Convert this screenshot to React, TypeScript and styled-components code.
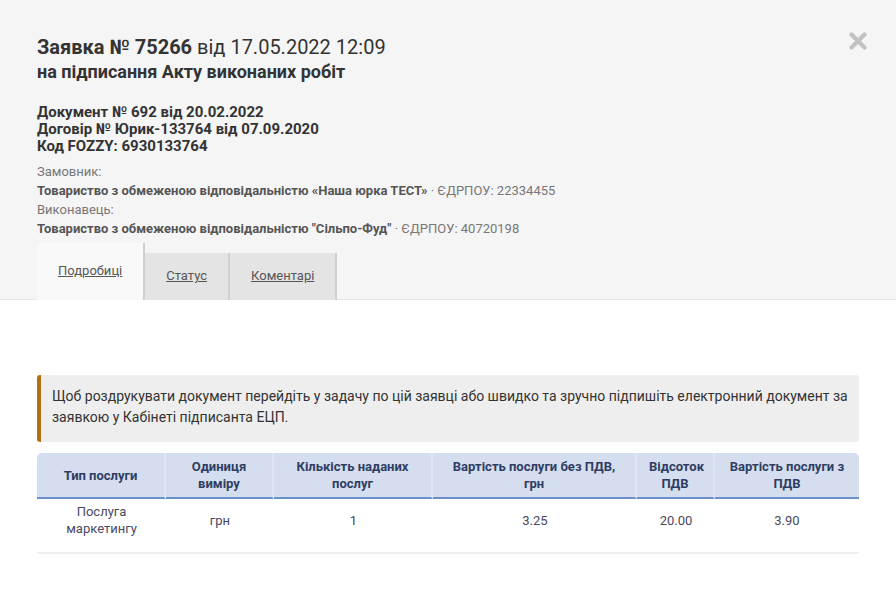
import React from "react"
import styled, { createGlobalStyle } from "styled-components"

const GlobalStyle = createGlobalStyle`
  body {
    margin: 0;
    background: #ffffff;
    font-family: Roboto, "Noto Sans", Arial, sans-serif;
    color: #333333;
  }
`

const Header = styled.div`
  position: relative;
  display: flex;
  flex-direction: column;
  box-sizing: border-box;
  background: #f5f5f5;
  border-bottom: 1px solid #e6e6e6;
  padding: 34px 37px 0;
  height: 300px;
`

const Close = styled.button`
  position: absolute;
  top: 32px;
  right: 29px;
  width: 18px;
  height: 18px;
  padding: 0;
  border: 0;
  background: none;
  cursor: pointer;
`

const Title = styled.h1`
  margin: 0;
  font-size: 20px;
  line-height: 26px;
  font-weight: 400;
  color: #333333;

  b {
    font-weight: 700;
  }
`

const Subtitle = styled.h2`
  margin: 0;
  font-size: 18px;
  line-height: 24px;
  font-weight: 700;
  color: #333333;
`

const DocInfo = styled.div`
  margin-top: 20px;
  font-size: 15px;
  line-height: 17px;
  font-weight: 700;
  color: #333333;
`

const Parties = styled.div`
  margin-top: 7px;
  font-size: 13px;
  line-height: 19px;
  color: #777777;
`

const PartyName = styled.div`
  b {
    font-weight: 700;
    color: #555555;
  }
`

const Tabs = styled.div`
  display: flex;
  align-items: flex-end;
  margin-top: auto;
  height: 56px;
`

const Tab = styled.a<{ $active?: boolean }>`
  display: flex;
  justify-content: center;
  box-sizing: border-box;
  height: ${(p) => (p.$active ? "57px" : "47px")};
  padding: ${(p) => (p.$active ? "20px 21px 0" : "15px 21px 0")};
  background: ${(p) => (p.$active ? "#f9f9f9" : "#e4e4e4")};
  border-right: 2px solid #cfcfcf;
  font-size: 13px;
  line-height: 16px;
  color: #555555;
  text-decoration: underline;
  cursor: pointer;
  margin-bottom: -1px;
`

const Content = styled.div`
  padding: 75px 37px 0;
`

const Notice = styled.div`
  background: #eeeeee;
  border-left: 4px solid #b5700f;
  border-radius: 3px;
  padding: 11px 8px 14px 11px;
  font-size: 14px;
  line-height: 21px;
  color: #333333;
`

const Table = styled.table`
  width: 100%;
  margin-top: 11px;
  border-collapse: separate;
  border-spacing: 0;
  table-layout: fixed;
`

const Th = styled.th`
  background: #d5deee;
  border-bottom: 2px solid #6b8fc8;
  border-right: 2px solid #dfe6f2;
  height: 44px;
  padding: 0 12px;
  font-size: 13px;
  line-height: 17px;
  font-weight: 700;
  color: #2f3d63;
  text-align: center;

  &:first-child {
    border-top-left-radius: 5px;
  }
  &:last-child {
    border-top-right-radius: 5px;
    border-right: 0;
  }
`

const Td = styled.td`
  padding: 4px 12px 15px;
  border-bottom: 2px solid #efefef;
  font-size: 13px;
  line-height: 17px;
  color: #4a4860;
  text-align: center;
  vertical-align: middle;
`

const columns = [
  { title: "Тип послуги", width: 129 },
  { title: "Одиниця виміру", width: 108 },
  { title: "Кількість наданих послуг", width: 159 },
  { title: "Вартість послуги без ПДВ, грн", width: 204 },
  { title: "Відсоток ПДВ", width: 78 },
  { title: "Вартість послуги з ПДВ", width: 144 },
]

const rows = [["Послуга маркетингу", "грн", "1", "3.25", "20.00", "3.90"]]

export default function App() {
  return (
    <>
      <GlobalStyle />
      <Header>
        <Close aria-label="Закрити">
          <svg width="18" height="18" viewBox="0 0 18 18">
            <path d="M2.5 2.5 L15.5 15.5 M15.5 2.5 L2.5 15.5" stroke="#c2c2c2" strokeWidth="4.2" strokeLinecap="round" />
          </svg>
        </Close>
        <Title>
          <b>Заявка № 75266</b> від 17.05.2022 12:09
        </Title>
        <Subtitle>на підписання Акту виконаних робіт</Subtitle>
        <DocInfo>
          <div>Документ № 692 від 20.02.2022</div>
          <div>Договір № Юрик-133764 від 07.09.2020</div>
          <div>Код FOZZY: 6930133764</div>
        </DocInfo>
        <Parties>
          <div>Замовник:</div>
          <PartyName>
            <b>Товариство з обмеженою відповідальністю «Наша юрка ТЕСТ»</b> · ЄДРПОУ: 22334455
          </PartyName>
          <div>Виконавець:</div>
          <PartyName>
            <b>Товариство з обмеженою відповідальністю "Сільпо-Фуд"</b> · ЄДРПОУ: 40720198
          </PartyName>
        </Parties>
        <Tabs>
          <Tab $active>Подробиці</Tab>
          <Tab>Статус</Tab>
          <Tab>Коментарі</Tab>
        </Tabs>
      </Header>
      <Content>
        <Notice>
          Щоб роздрукувати документ перейдіть у задачу по цій заявці або швидко та зручно підпишіть електронний
          документ за заявкою у Кабінеті підписанта ЕЦП.
        </Notice>
        <Table>
          <colgroup>
            {columns.map((c) => (
              <col key={c.title} style={{ width: c.width }} />
            ))}
          </colgroup>
          <thead>
            <tr>
              {columns.map((c) => (
                <Th key={c.title}>{c.title}</Th>
              ))}
            </tr>
          </thead>
          <tbody>
            {rows.map((r, i) => (
              <tr key={i}>
                {r.map((v, j) => (
                  <Td key={j}>{v}</Td>
                ))}
              </tr>
            ))}
          </tbody>
        </Table>
      </Content>
    </>
  )
}
